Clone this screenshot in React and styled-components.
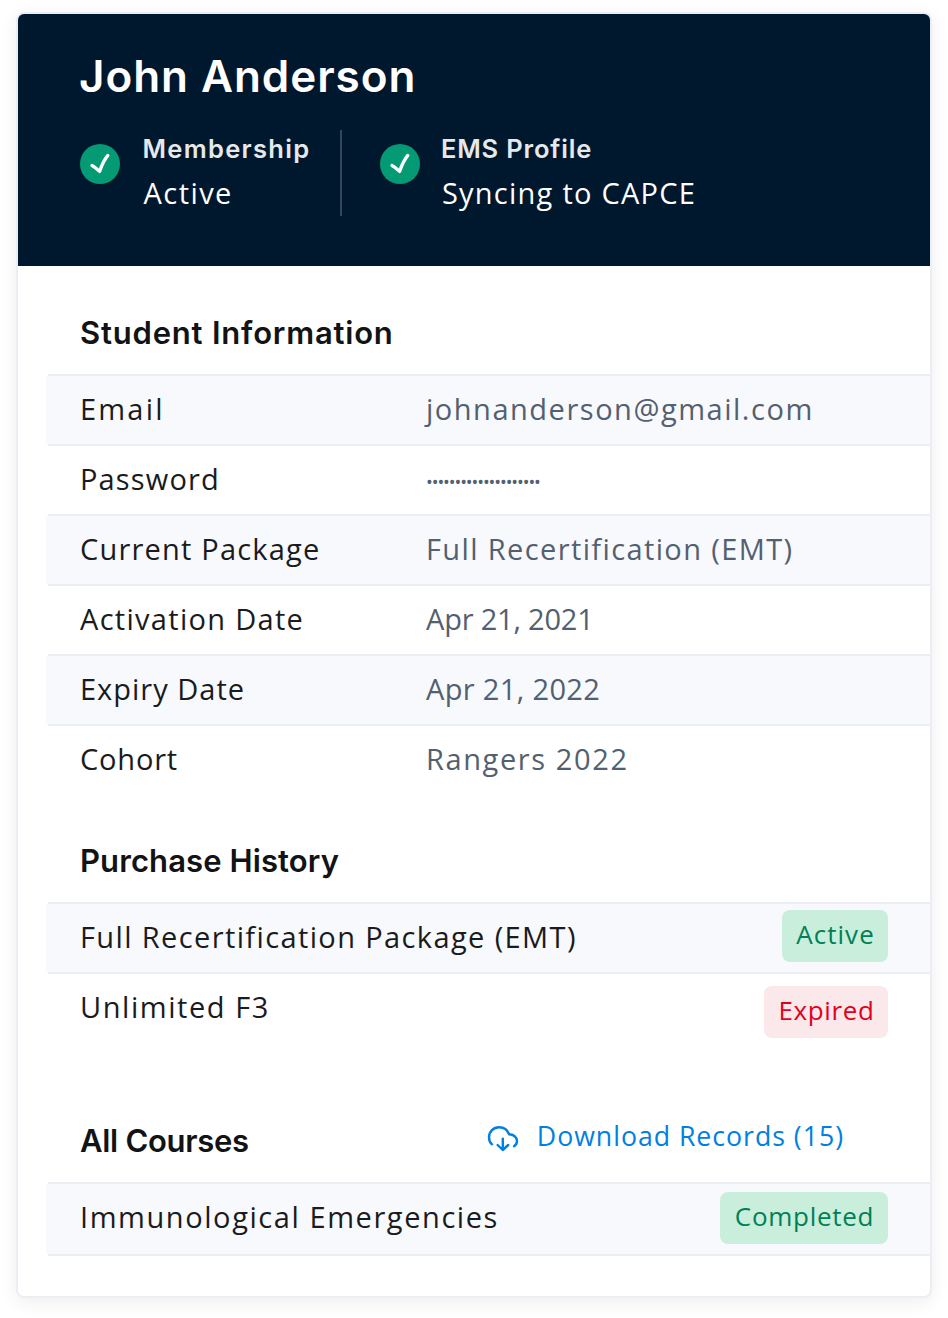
import React from 'react';
import styled, { createGlobalStyle } from 'styled-components';

const GlobalStyle = createGlobalStyle`
  * {
    box-sizing: border-box;
  }
  body {
    margin: 0;
    background: #fff;
    font-family: 'Open Sans', 'Noto Sans', sans-serif;
    color: #1a1b1c;
  }
  h1, h2, p {
    margin: 0;
  }
`;

const Card = styled.main`
  width: 916px;
  height: 1286px;
  margin: 12px 16px 20px;
  border: 2px solid #ebeff3;
  border-radius: 8px;
  background: #fff;
  box-shadow: 0 4px 18px rgba(0, 0, 0, 0.07);
  overflow: hidden;
`;

const Header = styled.header`
  height: 252px;
  padding: 32px 62px 0;
  background: #00182e;
  color: #fff;
`;

const Name = styled.h1`
  margin-left: -1px;
  font: 600 44px/60px Inter, sans-serif;
  letter-spacing: 0.95px;
`;

const Statuses = styled.div`
  display: flex;
  margin-top: 24px;
`;

const Status = styled.div`
  display: flex;
  gap: ${(props) => props.$gap}px;
  height: 86px;
  & + & {
    margin-left: 30px;
    padding-left: 38px;
    border-left: 2px solid #334556;
  }
  svg {
    margin-top: 14px;
    flex: none;
  }
`;

const StatusLabel = styled.p`
  font: 600 25.5px/38px Inter, sans-serif;
  letter-spacing: ${(props) => props.$track}px;
  color: #e6e8ea;
`;

const StatusValue = styled.p`
  padding-left: 1px;
  font-size: 29px;
  line-height: 50px;
  letter-spacing: ${(props) => props.$track}px;
`;

const Section = styled.section`
  margin-top: ${(props) => props.$top || 0}px;
  padding-left: 28px;
`;

const SectionHead = styled.div`
  display: flex;
  justify-content: space-between;
  height: 108px;
  padding: 0 86px 0 34px;
`;

const Heading = styled.h2`
  padding-top: 45px;
  font: 600 31px/44px Inter, sans-serif;
  letter-spacing: ${(props) => props.$track}px;
  color: #121314;
`;

const Download = styled.a`
  display: flex;
  align-items: center;
  gap: 18px;
  height: 44px;
  margin-top: 39px;
  font-size: 26.7px;
  letter-spacing: 0.97px;
  color: #0080e0;
  svg {
    margin-top: 7px;
  }
`;

const Row = styled.div`
  margin-left: 2px;
  border-top: 2px solid #ebeff3;
  ${(props) => props.$closed && 'border-bottom: 2px solid #ebeff3;'}
`;

const RowBody = styled.div`
  display: flex;
  height: ${(props) => props.$height || 68}px;
  margin-left: -2px;
  padding: 0 42px 0 34px;
  background: ${(props) => (props.$shaded ? '#f8f9fd' : '#fff')};
  font-size: 29px;
  line-height: 66px;
  white-space: nowrap;
`;

const Label = styled.span`
  width: 346px;
  letter-spacing: ${(props) => props.$track}px;
`;

const Value = styled.span`
  letter-spacing: ${(props) => props.$track}px;
  color: #536070;
`;

const Dots = styled(Value)`
  padding-top: 3px;
  font-size: 18px;
`;

const Title = styled.span`
  flex: 1;
  letter-spacing: ${(props) => props.$track}px;
`;

const tones = {
  green: 'background: #c9eedc; color: #008055;',
  red: 'background: #fbe8ea; color: #e3001b;',
};

const Badge = styled.span`
  width: ${(props) => props.$width}px;
  height: 52px;
  margin-top: ${(props) => props.$top}px;
  border-radius: 8px;
  padding-left: 1px;
  font-size: 26px;
  line-height: 49px;
  text-align: center;
  letter-spacing: ${(props) => props.$track}px;
  ${(props) => tones[props.$tone]}
`;

const info = [
  { label: 'Email', track: 2.2, value: 'johnanderson@gmail.com', valueTrack: 1.52 },
  { label: 'Password', track: 1.15, value: '•'.repeat(20), valueTrack: -1.08, hidden: true },
  { label: 'Current Package', track: 1.2, value: 'Full Recertification (EMT)', valueTrack: 1.38 },
  { label: 'Activation Date', track: 1.3, value: 'Apr 21, 2021', valueTrack: -0.2 },
  { label: 'Expiry Date', track: 1, value: 'Apr 21, 2022', valueTrack: 0.35 },
  { label: 'Cohort', track: 0.8, value: 'Rangers 2022', valueTrack: 1.6 },
];

const purchases = [
  { title: 'Full Recertification Package (EMT)', track: 1.38, status: 'Active', tone: 'green', width: 106, top: 6, badgeTrack: 1.05 },
  { title: 'Unlimited F3', track: 1.55, status: 'Expired', tone: 'red', width: 124, top: 12, badgeTrack: 0.6 },
];

const courses = [
  { title: 'Immunological Emergencies', track: 1.57, status: 'Completed', tone: 'green', width: 168, top: 8, badgeTrack: 0.72 },
];

function CheckIcon() {
  return (
    <svg width="40" height="40" viewBox="0 0 40 40" fill="none">
      <circle cx="20" cy="20" r="20" fill="#049a74" />
      <path d="M12 21.4C14.8 22.8 17 24.8 19.6 27.4C21.6 21.6 24 16 27.8 11.4" stroke="#fff" strokeWidth="3.3" strokeLinecap="round" strokeLinejoin="round" />
    </svg>
  );
}

function CloudIcon() {
  return (
    <svg width="32" height="28" viewBox="0 0 32 28" fill="none" stroke="currentColor" strokeWidth="2.4" strokeLinecap="round" strokeLinejoin="round">
      <path d="M5 19.3C3 17.5 2 15.1 2 12.4C2 6.7 6.5 2.3 12.1 2.3C16.8 2.3 20.6 5.1 21.9 9.2C26.6 9.2 30 12.3 30 16.1C30 18.4 28.9 20.3 27 21.3" />
      <path d="M15.8 13.6V25M10.6 20L15.8 25L21.2 20" />
    </svg>
  );
}

function RecordRow({ record, shaded, closed }) {
  return (
    <Row $closed={closed}>
      <RowBody $shaded={shaded} $height={closed ? 70 : 68}>
        <Title $track={record.track}>{record.title}</Title>
        <Badge $tone={record.tone} $width={record.width} $top={record.top} $track={record.badgeTrack}>{record.status}</Badge>
      </RowBody>
    </Row>
  );
}

function App() {
  return (
    <>
      <GlobalStyle />
      <Card>
        <Header>
          <Name>John Anderson</Name>
          <Statuses>
            <Status $gap={22.5}>
              <CheckIcon />
              <div>
                <StatusLabel $track={1.3}>Membership</StatusLabel>
                <StatusValue $track={1.45}>Active</StatusValue>
              </div>
            </Status>
            <Status $gap={20.5}>
              <CheckIcon />
              <div>
                <StatusLabel $track={0.85}>EMS Profile</StatusLabel>
                <StatusValue $track={1.25}>Syncing to CAPCE</StatusValue>
              </div>
            </Status>
          </Statuses>
        </Header>
        <Section>
          <SectionHead>
            <Heading $track={0.8}>Student Information</Heading>
          </SectionHead>
          {info.map((item, i) => (
            <Row key={item.label}>
              <RowBody $shaded={i % 2 === 0}>
                <Label $track={item.track}>{item.label}</Label>
                {item.hidden
                  ? <Dots $track={item.valueTrack}>{item.value}</Dots>
                  : <Value $track={item.valueTrack}>{item.value}</Value>}
              </RowBody>
            </Row>
          ))}
        </Section>
        <Section>
          <SectionHead>
            <Heading $track={0.1}>Purchase History</Heading>
          </SectionHead>
          {purchases.map((item, i) => (
            <RecordRow key={item.title} record={item} shaded={i % 2 === 0} />
          ))}
        </Section>
        <Section $top={32}>
          <SectionHead>
            <Heading $track={-0.3}>All Courses</Heading>
            <Download>
              <CloudIcon />
              Download Records (15)
            </Download>
          </SectionHead>
          {courses.map((item) => (
            <RecordRow key={item.title} record={item} shaded closed />
          ))}
        </Section>
      </Card>
    </>
  );
}

export default App;
